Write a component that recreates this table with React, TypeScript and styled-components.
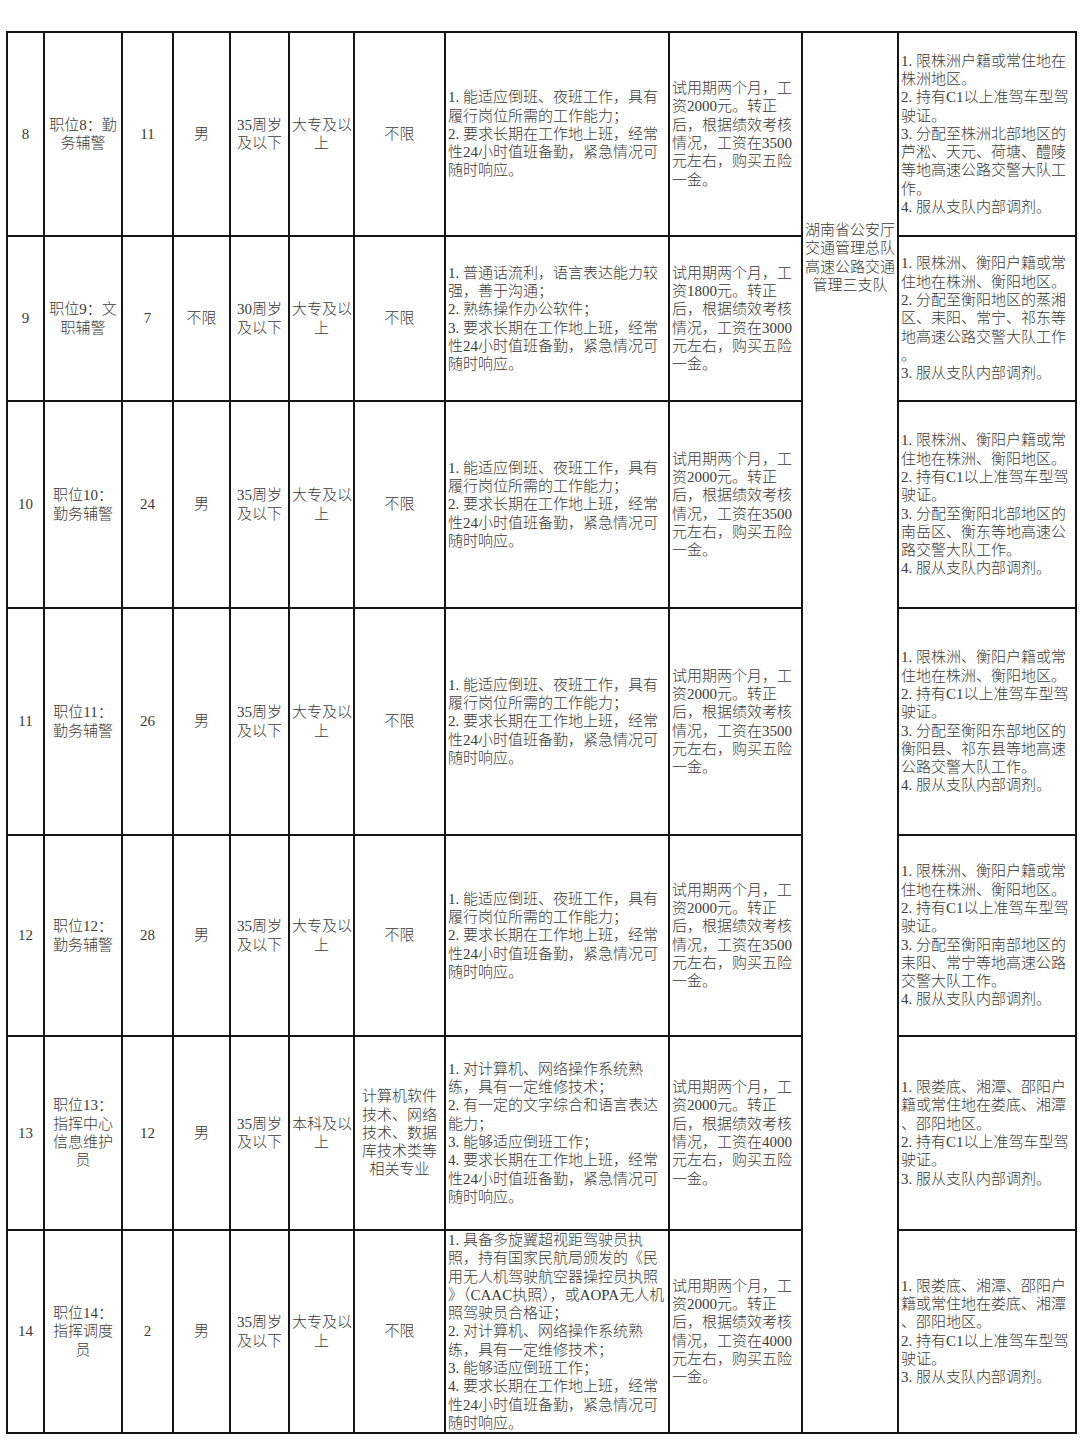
import styled, { createGlobalStyle } from "styled-components"

const GlobalStyle = createGlobalStyle`
  html, body {
    margin: 0;
    padding: 0;
    background: #fff;
  }
  body {
    font-family: "Liberation Serif", "Noto Sans CJK SC", serif;
    color: #333;
  }
`

const Page = styled.div`
  width: 1080px;
  height: 1440px;
  box-sizing: border-box;
  padding: 31px 0 0 6px;
  background: #fff;
  overflow: hidden;
`

const Sheet = styled.table`
  border-collapse: collapse;
  table-layout: fixed;
  width: 1069px;
  border: 2px solid #444;
`

const Row = styled.tr<{ $h: number }>`
  height: ${p => p.$h}px;
`

const Cell = styled.td<{ $align?: "left" | "center"; $top?: number }>`
  border: 2px solid #161616;
  padding: ${p => (p.$top ? `${p.$top}px 2px 0` : "0 2px")};
  vertical-align: ${p => (p.$top ? "top" : "middle")};
  text-align: ${p => p.$align || "center"};
  font-size: 15px;
  font-weight: 300;
  line-height: 18.3px;
  color: #3a3a3a;
  overflow: hidden;
`

const Line = styled.div`
  white-space: nowrap;
`

const widths = [37, 78, 51, 57, 59, 65, 91, 224, 133, 96, 178]

const REQ_SHIFT = [
  "1. 能适应倒班、夜班工作，具有",
  "履行岗位所需的工作能力；",
  "2. 要求长期在工作地上班，经常",
  "性24小时值班备勤，紧急情况可",
  "随时响应。",
]

const pay = (start: string, after: string) => [
  "试用期两个月，工",
  `资${start}元。转正`,
  "后，根据绩效考核",
  `情况，工资在${after}`,
  "元左右，购买五险",
  "一金。",
]

const NOTE_LOUDI = [
  "1. 限娄底、湘潭、邵阳户",
  "籍或常住地在娄底、湘潭",
  "、邵阳地区。",
  "2. 持有C1以上准驾车型驾",
  "驶证。",
  "3. 服从支队内部调剂。",
]

type Job = {
  no: string
  name: string[]
  count: string
  gender: string
  age: string[]
  edu: string[]
  major: string[]
  req: string[]
  salary: string[]
  note: string[]
  h: number
}

const jobs: Job[] = [
  {
    no: "8",
    name: ["职位8：勤", "务辅警"],
    count: "11",
    gender: "男",
    age: ["35周岁", "及以下"],
    edu: ["大专及以", "上"],
    major: ["不限"],
    req: REQ_SHIFT,
    salary: pay("2000", "3500"),
    note: [
      "1. 限株洲户籍或常住地在",
      "株洲地区。",
      "2. 持有C1以上准驾车型驾",
      "驶证。",
      "3. 分配至株洲北部地区的",
      "芦淞、天元、荷塘、醴陵",
      "等地高速公路交警大队工",
      "作。",
      "4. 服从支队内部调剂。",
    ],
    h: 204,
  },
  {
    no: "9",
    name: ["职位9：文", "职辅警"],
    count: "7",
    gender: "不限",
    age: ["30周岁", "及以下"],
    edu: ["大专及以", "上"],
    major: ["不限"],
    req: [
      "1. 普通话流利，语言表达能力较",
      "强，善于沟通；",
      "2. 熟练操作办公软件；",
      "3. 要求长期在工作地上班，经常",
      "性24小时值班备勤，紧急情况可",
      "随时响应。",
    ],
    salary: pay("1800", "3000"),
    note: [
      "1. 限株洲、衡阳户籍或常",
      "住地在株洲、衡阳地区。",
      "2. 分配至衡阳地区的蒸湘",
      "区、耒阳、常宁、祁东等",
      "地高速公路交警大队工作",
      "。",
      "3. 服从支队内部调剂。",
    ],
    h: 165,
  },
  {
    no: "10",
    name: ["职位10：", "勤务辅警"],
    count: "24",
    gender: "男",
    age: ["35周岁", "及以下"],
    edu: ["大专及以", "上"],
    major: ["不限"],
    req: REQ_SHIFT,
    salary: pay("2000", "3500"),
    note: [
      "1. 限株洲、衡阳户籍或常",
      "住地在株洲、衡阳地区。",
      "2. 持有C1以上准驾车型驾",
      "驶证。",
      "3. 分配至衡阳北部地区的",
      "南岳区、衡东等地高速公",
      "路交警大队工作。",
      "4. 服从支队内部调剂。",
    ],
    h: 207,
  },
  {
    no: "11",
    name: ["职位11：", "勤务辅警"],
    count: "26",
    gender: "男",
    age: ["35周岁", "及以下"],
    edu: ["大专及以", "上"],
    major: ["不限"],
    req: REQ_SHIFT,
    salary: pay("2000", "3500"),
    note: [
      "1. 限株洲、衡阳户籍或常",
      "住地在株洲、衡阳地区。",
      "2. 持有C1以上准驾车型驾",
      "驶证。",
      "3. 分配至衡阳东部地区的",
      "衡阳县、祁东县等地高速",
      "公路交警大队工作。",
      "4. 服从支队内部调剂。",
    ],
    h: 227,
  },
  {
    no: "12",
    name: ["职位12：", "勤务辅警"],
    count: "28",
    gender: "男",
    age: ["35周岁", "及以下"],
    edu: ["大专及以", "上"],
    major: ["不限"],
    req: REQ_SHIFT,
    salary: pay("2000", "3500"),
    note: [
      "1. 限株洲、衡阳户籍或常",
      "住地在株洲、衡阳地区。",
      "2. 持有C1以上准驾车型驾",
      "驶证。",
      "3. 分配至衡阳南部地区的",
      "耒阳、常宁等地高速公路",
      "交警大队工作。",
      "4. 服从支队内部调剂。",
    ],
    h: 201,
  },
  {
    no: "13",
    name: ["职位13：", "指挥中心", "信息维护", "员"],
    count: "12",
    gender: "男",
    age: ["35周岁", "及以下"],
    edu: ["本科及以", "上"],
    major: ["计算机软件", "技术、网络", "技术、数据", "库技术类等", "相关专业"],
    req: [
      "1. 对计算机、网络操作系统熟",
      "练，具有一定维修技术；",
      "2. 有一定的文字综合和语言表达",
      "能力；",
      "3. 能够适应倒班工作；",
      "4. 要求长期在工作地上班，经常",
      "性24小时值班备勤，紧急情况可",
      "随时响应。",
    ],
    salary: pay("2000", "4000"),
    note: NOTE_LOUDI,
    h: 194,
  },
  {
    no: "14",
    name: ["职位14：", "指挥调度", "员"],
    count: "2",
    gender: "男",
    age: ["35周岁", "及以下"],
    edu: ["大专及以", "上"],
    major: ["不限"],
    req: [
      "1. 具备多旋翼超视距驾驶员执",
      "照，持有国家民航局颁发的《民",
      "用无人机驾驶航空器操控员执照",
      "》（CAAC执照），或AOPA无人机",
      "照驾驶员合格证；",
      "2. 对计算机、网络操作系统熟",
      "练，具有一定维修技术；",
      "3. 能够适应倒班工作；",
      "4. 要求长期在工作地上班，经常",
      "性24小时值班备勤，紧急情况可",
      "随时响应。",
    ],
    salary: pay("2000", "4000"),
    note: NOTE_LOUDI,
    h: 202,
  },
]

const Lines = ({ items }: { items: string[] }) => (
  <>
    {items.map((t, i) => (
      <Line key={i}>{t}</Line>
    ))}
  </>
)

export default function App() {
  return (
    <Page>
      <GlobalStyle />
      <Sheet>
        <colgroup>
          {widths.map((w, i) => (
            <col key={i} style={{ width: w }} />
          ))}
        </colgroup>
        <tbody>
          {jobs.map((job, i) => (
            <Row key={job.no} $h={job.h}>
              <Cell>{job.no}</Cell>
              <Cell><Lines items={job.name} /></Cell>
              <Cell>{job.count}</Cell>
              <Cell>{job.gender}</Cell>
              <Cell><Lines items={job.age} /></Cell>
              <Cell><Lines items={job.edu} /></Cell>
              <Cell><Lines items={job.major} /></Cell>
              <Cell $align="left"><Lines items={job.req} /></Cell>
              <Cell $align="left"><Lines items={job.salary} /></Cell>
              {i === 0 && (
                <Cell rowSpan={jobs.length} $top={188}>
                  <Lines items={["湖南省公安厅", "交通管理总队", "高速公路交通", "管理三支队"]} />
                </Cell>
              )}
              <Cell $align="left"><Lines items={job.note} /></Cell>
            </Row>
          ))}
        </tbody>
      </Sheet>
    </Page>
  )
}
